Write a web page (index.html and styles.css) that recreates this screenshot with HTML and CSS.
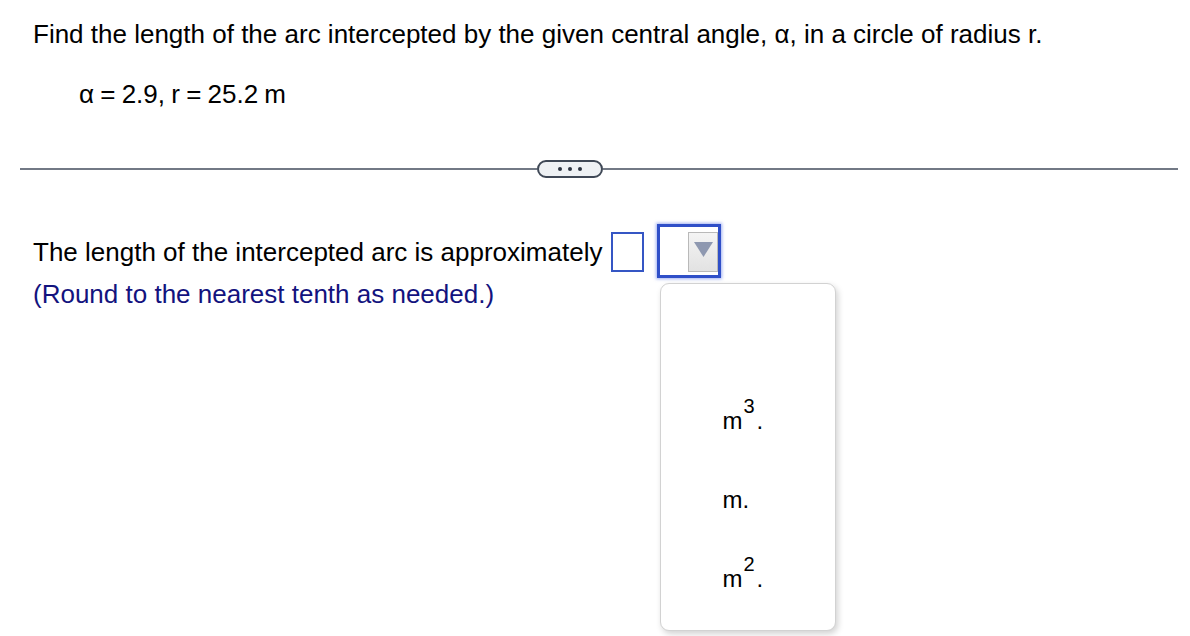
FILE: index.html
```html
<!DOCTYPE html>
<html>
<head>
<meta charset="utf-8">
<link rel="stylesheet" href="styles.css">
</head>
<body>
<div class="page">
  <p class="question">Find the length of the arc intercepted by the given central angle, α, in a circle of radius r.</p>
  <p class="given">α = 2.9, r = 25.2 m</p>
  <div class="divider">
    <span class="rule rule-left"></span>
    <span class="more"><i></i><i></i><i></i></span>
    <span class="rule"></span>
  </div>
  <div class="answer">
    <span class="answer-text">The length of the intercepted arc is approximately</span>
    <span class="input-box"></span>
    <div class="select-wrap">
      <span class="select">
        <span class="select-btn">
          <svg width="19" height="15" viewBox="0 0 19 15"><polygon points="0,0 19,0 9.5,15" fill="#8e98b0"/></svg>
        </span>
      </span>
      <div class="menu">
        <div class="opt">m<sup>3</sup>.</div>
        <div class="opt">m.</div>
        <div class="opt">m<sup>2</sup>.</div>
      </div>
    </div>
  </div>
  <p class="hint">(Round to the nearest tenth as needed.)</p>
</div>
</body>
</html>
```

FILE: styles.css
```css
html, body {
  margin: 0;
  padding: 0;
  background: #fff;
}
body {
  font-family: "Liberation Sans", Arial, sans-serif;
  color: #000;
  width: 1190px;
  height: 636px;
  overflow: hidden;
}
.page {
  padding: 19px 12px 0 20px;
}
.question {
  margin: 0 0 0 13px;
  font-size: 26px;
  line-height: 30px;
}
.given {
  margin: 30px 0 0 59px;
  font-size: 26px;
  line-height: 30px;
  word-spacing: -1px;
}
.divider {
  display: flex;
  align-items: center;
  margin-top: 50px;
  height: 20px;
}
.rule {
  flex: 1;
  height: 2px;
  background: #727985;
}
.rule-left {
  flex: 0 0 517px;
}
.more {
  box-sizing: border-box;
  width: 66px;
  height: 18px;
  border: 2px solid #3f4856;
  border-radius: 10px;
  background: #eef1f4;
  display: flex;
  align-items: center;
  justify-content: center;
  gap: 6px;
}
.more i {
  width: 4px;
  height: 4px;
  border-radius: 50%;
  background: #2b3340;
}
.answer {
  display: flex;
  align-items: flex-start;
  margin: 45px 0 0 13px;
  height: 54px;
}
.answer-text {
  font-size: 26px;
  line-height: 30px;
  margin-top: 13px;
}
.input-box {
  box-sizing: border-box;
  width: 33px;
  height: 40px;
  border: 2px solid #3556c4;
  margin: 8px 0 0 9px;
}
.select-wrap {
  position: relative;
  margin-left: 13px;
}
.select {
  box-sizing: border-box;
  display: flex;
  justify-content: flex-end;
  width: 64px;
  height: 54px;
  border: 3px solid #2f4fc8;
  box-shadow: 0 0 3px 1px rgba(80, 110, 230, 0.55);
  padding: 5px 0 0 0;
}
.select-btn {
  box-sizing: border-box;
  width: 30px;
  height: 40px;
  border: 1px solid #b9b9b9;
  background: linear-gradient(#f4f4f4, #e2e2e2);
  display: flex;
  justify-content: center;
  padding-top: 9px;
}
.menu {
  position: absolute;
  left: 3px;
  top: 59px;
  width: 176px;
  height: 348px;
  box-sizing: border-box;
  border: 1px solid #d2d2d2;
  border-radius: 9px;
  background: #fff;
  box-shadow: 2px 3px 6px rgba(0, 0, 0, 0.18);
  padding: 122px 0 0 61px;
  display: flex;
  flex-direction: column;
  align-items: flex-start;
  gap: 49px;
}
.opt {
  font-size: 24px;
  line-height: 30px;
}
.opt sup {
  font-size: 20px;
  vertical-align: 16px;
  line-height: 0;
  margin-left: 1px;
  margin-right: 2px;
}
.hint {
  margin: 1px 0 0 13px;
  font-size: 26px;
  line-height: 30px;
  color: #13137e;
}
```
